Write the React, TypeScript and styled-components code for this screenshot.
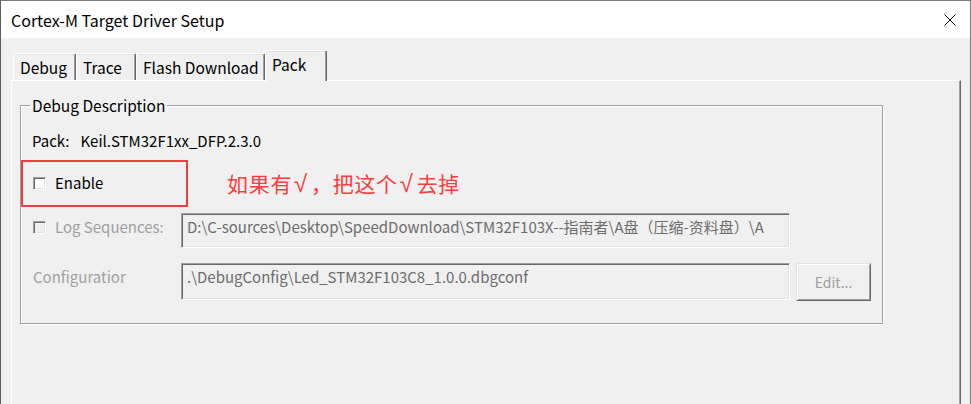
import React from "react";
import styled, { createGlobalStyle } from "styled-components";

const GlobalStyle = createGlobalStyle`
  html, body { margin: 0; padding: 0; background: #fff; }
  body { font-family: "Noto Sans CJK SC", "Noto Sans", sans-serif; }
  * { box-sizing: border-box; }
`;

const Window = styled.div`
  width: 971px;
  height: 404px;
  overflow: hidden;
  display: flex;
  flex-direction: column;
  border: 1px solid #7a7a7a;
  border-bottom: none;
  border-left-color: #5b5b5b;
`;

const TitleBar = styled.div`
  height: 37px;
  flex: none;
  background: #fff;
  display: flex;
  align-items: center;
  justify-content: space-between;
  padding: 0 14px 0 10px;
`;

const Title = styled.span`
  font-size: 16px;
  color: #000;
  line-height: 20px;
`;

const Body = styled.div`
  flex: 1;
  background: #f0f0f0;
  padding: 12px 9px 0 10px;
  display: flex;
  flex-direction: column;
`;

const TabStrip = styled.div`
  display: flex;
  align-items: flex-end;
  height: 30px;
  padding-left: 2px;
  position: relative;
  z-index: 1;
`;

const Tab = styled.div<{ $w: number; $active?: boolean }>`
  width: ${(p) => p.$w}px;
  height: ${(p) => (p.$active ? 31 : 27)}px;
  margin-bottom: ${(p) => (p.$active ? -1 : 0)}px;
  background: #f0f0f0;
  border-top: 1px solid #fff;
  border-left: 1px solid #fff;
  border-right: 1px solid #696969;
  box-shadow: inset -1px 0 #a0a0a0, inset 0 1px #e3e3e3;
  border-radius: 2px 2px 0 0;
  display: flex;
  align-items: center;
  padding: 0 0 ${(p) => (p.$active ? 4 : 0)}px 6px;
  font-size: 15.5px;
  color: #000;
  white-space: nowrap;
`;

const Panel = styled.div`
  height: 340px;
  flex: none;
  border-top: 1px solid #fff;
  border-left: 1px solid #fff;
  border-right: 1px solid #696969;
  box-shadow: inset -1px 0 #a0a0a0;
  padding: 14px 0 0 8px;
`;

const GroupBox = styled.fieldset`
  margin: 0;
  width: 863px;
  min-inline-size: 0;
  height: 229px;
  padding: 0 10px 0 11px;
  border: 1px solid #a0a0a0;
  box-shadow: inset 1px 1px #fff, 1px 1px #fff;
  display: flex;
  flex-direction: column;
`;

const Legend = styled.legend`
  font-size: 15.5px;
  line-height: 20px;
  padding: 0 2px;
  margin-left: -2px;
  color: #000;
`;

const PackLine = styled.div`
  margin-top: 16px;
  font-size: 15px;
  line-height: 20px;
  color: #000;
  display: flex;
  gap: 11px;
`;

const NoteRow = styled.div`
  margin-top: 9px;
  display: flex;
  align-items: center;
`;

const Highlight = styled.div`
  margin-left: -11px;
  width: 167px;
  height: 47px;
  border: 2px solid #f03c3c;
  display: flex;
  align-items: center;
  padding-left: 10px;
  padding-bottom: 1px;
  gap: 9px;
`;

const Note = styled.span`
  margin-left: 39px;
  font-size: 21px;
  letter-spacing: 0.7px;
  line-height: 26px;
  color: #fb3d3d;
`;

const Radical = styled.span`
  font-family: "Liberation Sans", "DejaVu Sans", sans-serif;
  font-size: 24px;
  padding: 0 3px 0 2px;
`;

const CheckBox = styled.span<{ $disabled?: boolean }>`
  width: 13px;
  height: 13px;
  flex: none;
  background: ${(p) => (p.$disabled ? "#f0f0f0" : "#fff")};
  border-top: 1px solid #a0a0a0;
  border-left: 1px solid #a0a0a0;
  border-bottom: 1px solid #fff;
  border-right: 1px solid #fff;
  box-shadow: inset 1px 1px #696969, inset -1px -1px #e3e3e3;
`;

const Label = styled.span<{ $disabled?: boolean }>`
  font-size: 15px;
  line-height: 20px;
  color: ${(p) => (p.$disabled ? "#a0a0a0" : "#000")};
  white-space: nowrap;
`;

const FieldRow = styled.div<{ $top: number }>`
  margin-top: ${(p) => p.$top}px;
  display: grid;
  grid-template-columns: 143px 609px 75px;
  column-gap: 6px;
  align-items: start;
`;

const LabelCell = styled.div`
  display: flex;
  align-items: center;
  gap: 9px;
  padding-top: 4px;
  padding-left: 1px;
`;

const TextField = styled.div<{ $h: number }>`
  height: ${(p) => p.$h}px;
  background: #f0f0f0;
  border-top: 1px solid #a0a0a0;
  border-left: 1px solid #a0a0a0;
  border-bottom: 1px solid #fff;
  border-right: 1px solid #fff;
  box-shadow: inset 1px 1px #696969, inset -1px -1px #e3e3e3;
  padding: 3px 0 0 5px;
  font-size: 15px;
  line-height: 20px;
  color: #6d6d6d;
  white-space: nowrap;
  overflow: hidden;
`;

const Button = styled.div`
  height: 38px;
  background: #f0f0f0;
  border-top: 1px solid #e3e3e3;
  border-left: 1px solid #e3e3e3;
  border-bottom: 1px solid #696969;
  border-right: 1px solid #696969;
  box-shadow: inset 1px 1px #fff, inset -1px -1px #a0a0a0;
  display: flex;
  align-items: center;
  justify-content: center;
  font-size: 14px;
  color: #a0a0a0;
`;

const CloseIcon = () => (
  <svg width="12" height="12" viewBox="0 0 12 12">
    <path d="M0.5 0.5 L11.5 11.5 M11.5 0.5 L0.5 11.5" stroke="#000" strokeWidth="1" fill="none" />
  </svg>
);

export default function App() {
  return (
    <>
      <GlobalStyle />
      <Window>
        <TitleBar>
          <Title>Cortex-M Target Driver Setup</Title>
          <CloseIcon />
        </TitleBar>
        <Body>
          <TabStrip>
            <Tab $w={63}>Debug</Tab>
            <Tab $w={60}>Trace</Tab>
            <Tab $w={129}>Flash Download</Tab>
            <Tab $w={62} $active>Pack</Tab>
          </TabStrip>
          <Panel>
            <GroupBox>
              <Legend>Debug Description</Legend>
              <PackLine>
                <span>Pack:</span>
                <span>Keil.STM32F1xx_DFP.2.3.0</span>
              </PackLine>
              <NoteRow>
                <Highlight>
                  <CheckBox />
                  <Label>Enable</Label>
                </Highlight>
                <Note>
                  如果有<Radical>√</Radical>，把这个<Radical>√</Radical>去掉
                </Note>
              </NoteRow>
              <FieldRow $top={6}>
                <LabelCell>
                  <CheckBox $disabled />
                  <Label $disabled>Log Sequences:</Label>
                </LabelCell>
                <TextField $h={35}>
                  D:\C-sources\Desktop\SpeedDownload\STM32F103X--指南者\A盘（压缩-资料盘）\A
                </TextField>
              </FieldRow>
              <FieldRow $top={15}>
                <LabelCell>
                  <Label $disabled>Configuratior</Label>
                </LabelCell>
                <TextField $h={37}>.\DebugConfig\Led_STM32F103C8_1.0.0.dbgconf</TextField>
                <Button>Edit...</Button>
              </FieldRow>
            </GroupBox>
          </Panel>
        </Body>
      </Window>
    </>
  );
}
